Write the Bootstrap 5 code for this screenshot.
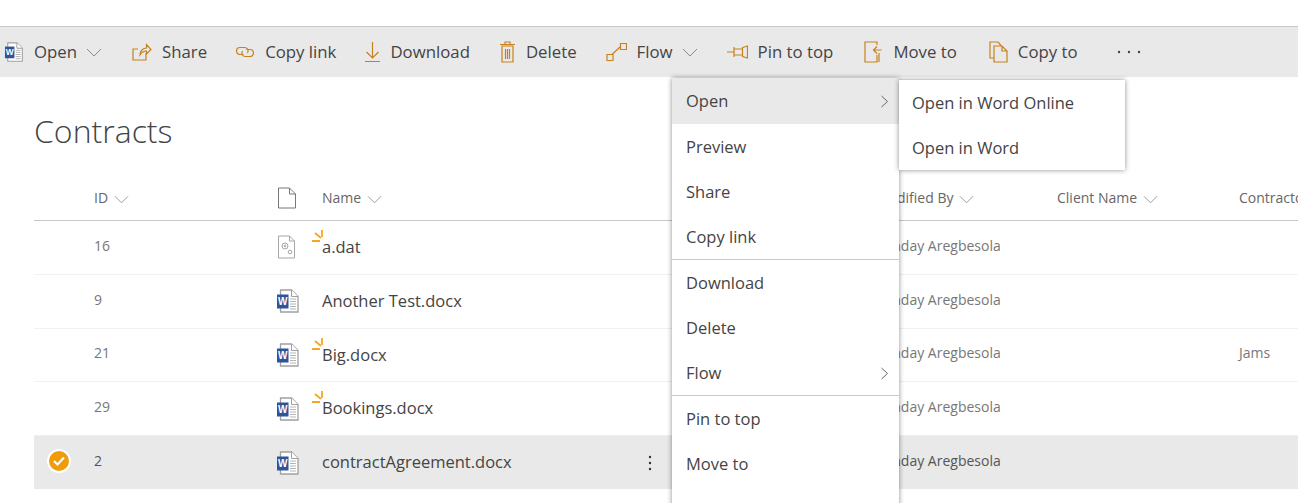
<!DOCTYPE html>
<html>

<head>
    <meta charset="utf-8">
    <meta name="viewport" content="width=device-width, initial-scale=1">
    <title>Contracts</title>
    <link href="https://cdn.jsdelivr.net/npm/bootstrap@5.3.3/dist/css/bootstrap.min.css" rel="stylesheet">
    <script src="https://cdn.jsdelivr.net/npm/bootstrap@5.3.3/dist/js/bootstrap.bundle.min.js"></script>
    <style>
        html, body { height: 503px; overflow: hidden; }
        body { font-family: "Open Sans", "Noto Sans", sans-serif; color: #444; background: #fff; position: relative; }

        .top-gap { height: 26px; }
        .cmd-bar { height: 51px; background: #e9e9e9; border-top: 1px solid #c8c8c8; font-size: 16.8px; padding-left: 4px; white-space: nowrap; }
        .cmd-item { margin-right: 29px; gap: 10px; }
        .cmd-item:nth-child(1) { margin-right: 30px; }
        .cmd-item:nth-child(2) { margin-right: 28px; }
        .cmd-item:nth-child(7) { margin-right: 31px; }
        .cmd-item:nth-child(8) { margin-right: 32px; }
        .cmd-item:nth-child(9) { margin-right: 31px; }
        .cmd-item svg { fill: none; stroke: #c8811f; stroke-width: 1.2; flex: none; }
        .cmd-item svg.chev { stroke: #888; stroke-width: 1; margin-left: -1px; }
        .cmd-dots { fill: #444; margin-left: 8px; }

        .page-title { font-size: 32px; font-weight: 300; line-height: 40px; margin: 34px 0 29px 34px; color: #444; }

        .doc-list { margin-left: 34px; }
        .doc-row { height: 53.75px; border-bottom: 1px solid #f1f1f1; font-size: 14px; color: #777; white-space: nowrap; position: relative; }
        .doc-head { height: 41px; padding-bottom: 5px; border-bottom: 1px solid #c8c8c8; font-size: 14px; color: #666; white-space: nowrap; }
        .doc-sel { background: #e9e9e9; border-bottom: 0; color: #555; height: 53px; }
        .col-check { width: 60px; flex: none; }
        .col-id { width: 183px; flex: none; }
        .col-name { width: 599px; flex: none; font-size: 16.5px; color: #444; position: relative; padding-left: 45px; }
        .col-by { width: 181px; flex: none; }
        .col-client { width: 182px; flex: none; }
        .doc-row .col-id, .doc-row .col-by, .doc-row .col-last, .doc-row .col-check { padding-bottom: 4px; }
        .doc-head .col-name { font-size: 14px; color: #666; }
        .doc-head svg.chev { fill: none; stroke: #999; margin-left: 6px; }
        .file-ico { position: absolute; left: 0; top: 50%; transform: translateY(-50%); }
        .new-mark { position: absolute; left: 35px; top: -5px; }
        .more-dots { position: absolute; left: 371px; top: 50%; transform: translateY(-50%); }

        .sel-check { width: 24px; height: 24px; margin-left: 13px; border-radius: 50%; background: #f09c0a; border: 2px solid #fff; display: flex; align-items: center; justify-content: center; }

        .pop-menu { position: absolute; background: #fff; box-shadow: 0 0 5px rgba(0, 0, 0, .45); font-size: 16.5px; color: #444; }
        .main-menu { left: 672px; top: 78px; width: 227px; height: 470px; z-index: 2; }
        .sub-menu { left: 899px; top: 80px; width: 226px; height: 90px; z-index: 3; }
        .menu-line { height: 45px; padding: 1px 10px 0 14px; white-space: nowrap; }
        .sub-menu .menu-line { padding-left: 13px; }
        .menu-on { background: #e9e9e9; height: 46px; }
        .menu-sep { border-top: 1px solid #c8c8c8; height: 46px; }
        .menu-line svg { fill: none; stroke: #666; }
    </style>
</head>

<body>
    <svg width="0" height="0" class="position-absolute">
        <defs>
            <symbol id="word" viewBox="0 0 22 24">
                <path d="M3.500 1h11l6.500 6.500V23H3.500z" fill="#fff" stroke="#a0a0a0" stroke-width="1.300"/>
                <path d="M14.500 1v6.500H21" fill="#fff" stroke="#a0a0a0"/>
                <path d="M13 10h6M13 12.500h6M13 15h6M13 17.500h6M13 20h6" stroke="#b5b5b5" fill="none"/>
                <rect x="0" y="5.500" width="11.500" height="14" fill="#2b579a"/>
                <text x="5.700" y="16" font-size="10" font-weight="700" text-anchor="middle" fill="#fff" stroke="none" font-family="Liberation Sans, sans-serif">W</text>
            </symbol>
            <symbol id="chevron" viewBox="0 0 16 9">
                <path d="M1 1l7 7 7-7"/>
            </symbol>
            <symbol id="spark" viewBox="0 0 13 14">
                <path d="M10 0v7M3 3l6 5M0 11h8" stroke="#f5a623" stroke-width="1.800" fill="none"/>
            </symbol>
        </defs>
    </svg>

    <div class="top-gap"></div>

    <div class="cmd-bar d-flex align-items-center">
        <div class="d-flex align-items-center cmd-item">
            <svg width="20" height="20" viewBox="0 0 22 24" style="stroke:none"><use href="#word"/></svg>
            <span>Open</span>
            <svg class="chev" width="16" height="9"><use href="#chevron"/></svg>
        </div>
        <div class="d-flex align-items-center cmd-item">
            <svg width="20" height="20" viewBox="0 0 20 20"><path d="M14 11v7H1V7h5M8 13c0-4 3-7 6.500-7V2.500L19 7.500l-4.500 4.500V9C11.500 9 9.500 10.500 8 13z"/></svg>
            <span>Share</span>
        </div>
        <div class="d-flex align-items-center cmd-item">
            <svg width="20" height="20" viewBox="0 0 20 20"><path d="M8.500 12.500H5a3.500 3.500 0 0 1 0-7h4.500a3.500 3.500 0 0 1 3 5.500M11.500 7.500H15a3.500 3.500 0 0 1 0 7h-4.500a3.500 3.500 0 0 1-3-5.500"/></svg>
            <span>Copy link</span>
        </div>
        <div class="d-flex align-items-center cmd-item">
            <svg width="15" height="22" viewBox="0 0 15 22"><path d="M7.500 1v16M1.500 11l6 6 6-6M0 20.500h15"/></svg>
            <span>Download</span>
        </div>
        <div class="d-flex align-items-center cmd-item">
            <svg width="17" height="22" viewBox="0 0 17 22"><path d="M3 5h11v16H3zM1 3.500h15M6 3.500V1h5v2.500M6.500 8v10M8.500 8v10M10.500 8v10"/></svg>
            <span>Delete</span>
        </div>
        <div class="d-flex align-items-center cmd-item">
            <svg width="21" height="20" viewBox="0 0 21 20"><path d="M1 12.500h6v6H1zM14.500 1.500h6v6h-6zM6 12.500l8.500-8"/></svg>
            <span>Flow</span>
            <svg class="chev" width="16" height="9"><use href="#chevron"/></svg>
        </div>
        <div class="d-flex align-items-center cmd-item">
            <svg width="21" height="14" viewBox="0 0 21 14"><path d="M0 7h7M7 2v10M7 4h8.500M7 10h8.500M15.500 2.500L20.500 1v12l-5-1.500z"/></svg>
            <span>Pin to top</span>
        </div>
        <div class="d-flex align-items-center cmd-item">
            <svg width="19" height="22" viewBox="0 0 19 22"><path d="M13 4V1H1v20h12v-3M17.500 9H10M13 5.500L9.500 9l3.500 3.500M15 12v9M13 14v7"/></svg>
            <span>Move to</span>
        </div>
        <div class="d-flex align-items-center cmd-item">
            <svg width="19" height="22" viewBox="0 0 19 22"><path d="M5 17H1V1h8l3 3.500M5 5h8l5 5v11H5zM13 5v5h5"/></svg>
            <span>Copy to</span>
        </div>
        <svg class="cmd-dots" width="24" height="4" viewBox="0 0 24 4"><circle cx="2" cy="2" r="1.200"/><circle cx="12" cy="2" r="1.200"/><circle cx="22" cy="2" r="1.200"/></svg>
    </div>

    <h1 class="page-title">Contracts</h1>

    <div class="doc-list">
        <div class="d-flex align-items-center doc-head">
            <div class="col-check"></div>
            <div class="col-id">ID<svg class="chev" width="15" height="9"><use href="#chevron"/></svg></div>
            <div class="col-name">
                <svg class="file-ico" width="20" height="22" viewBox="0 0 20 22" fill="none" stroke="#777"><path d="M1.500 1h11l6 6v14h-17zM12.500 1v6h6"/></svg>
                Name<svg class="chev" width="15" height="9"><use href="#chevron"/></svg>
            </div>
            <div class="col-by">Modified By<svg class="chev" width="15" height="9"><use href="#chevron"/></svg></div>
            <div class="col-client">Client Name<svg class="chev" width="15" height="9"><use href="#chevron"/></svg></div>
            <div>Contractor</div>
        </div>

        <div class="d-flex align-items-center doc-row">
            <div class="col-check"></div>
            <div class="col-id">16</div>
            <div class="col-name">
                <svg class="file-ico" width="19" height="24" viewBox="0 0 19 24" fill="none" stroke="#a6a6a6"><path d="M1.500 1h11l5 5v17h-16zM12.500 1v5h5"/><circle cx="8" cy="11" r="3"/><circle cx="8" cy="11" r="1"/><circle cx="13" cy="17" r="1.800"/></svg>
                <svg class="new-mark" width="13" height="14"><use href="#spark"/></svg>
                a.dat
            </div>
            <div class="col-by">Sunday Aregbesola</div>
        </div>
        <div class="d-flex align-items-center doc-row">
            <div class="col-check"></div>
            <div class="col-id">9</div>
            <div class="col-name">
                <svg class="file-ico" width="22" height="24"><use href="#word"/></svg>
                Another Test.docx
            </div>
            <div class="col-by">Sunday Aregbesola</div>
        </div>
        <div class="d-flex align-items-center doc-row">
            <div class="col-check"></div>
            <div class="col-id">21</div>
            <div class="col-name">
                <svg class="file-ico" width="22" height="24"><use href="#word"/></svg>
                <svg class="new-mark" width="13" height="14"><use href="#spark"/></svg>
                Big.docx
            </div>
            <div class="col-by">Sunday Aregbesola</div>
            <div class="col-client"></div>
            <div class="col-last">Jams</div>
        </div>
        <div class="d-flex align-items-center doc-row">
            <div class="col-check"></div>
            <div class="col-id">29</div>
            <div class="col-name">
                <svg class="file-ico" width="22" height="24"><use href="#word"/></svg>
                <svg class="new-mark" width="13" height="14"><use href="#spark"/></svg>
                Bookings.docx
            </div>
            <div class="col-by">Sunday Aregbesola</div>
        </div>
        <div class="d-flex align-items-center doc-row doc-sel">
            <div class="col-check">
                <div class="sel-check">
                    <svg width="12" height="10" viewBox="0 0 12 10" fill="none" stroke="#fff" stroke-width="2"><path d="M1 5l3.500 3.500L11 1.500"/></svg>
                </div>
            </div>
            <div class="col-id">2</div>
            <div class="col-name">
                <svg class="file-ico" width="22" height="24"><use href="#word"/></svg>
                contractAgreement.docx
                <svg class="more-dots" width="4" height="16" viewBox="0 0 4 16" fill="#333"><circle cx="2" cy="2" r="1.200"/><circle cx="2" cy="8" r="1.200"/><circle cx="2" cy="14" r="1.200"/></svg>
            </div>
            <div class="col-by">Sunday Aregbesola</div>
        </div>
    </div>

    <div class="pop-menu main-menu">
        <div class="d-flex align-items-center justify-content-between menu-line menu-on">
            <span>Open</span>
            <svg width="9" height="13" viewBox="0 0 9 13"><path d="M1.500 1l6 5.500-6 5.500"/></svg>
        </div>
        <div class="d-flex align-items-center menu-line">Preview</div>
        <div class="d-flex align-items-center menu-line">Share</div>
        <div class="d-flex align-items-center menu-line">Copy link</div>
        <div class="d-flex align-items-center menu-line menu-sep">Download</div>
        <div class="d-flex align-items-center menu-line">Delete</div>
        <div class="d-flex align-items-center justify-content-between menu-line">
            <span>Flow</span>
            <svg width="9" height="13" viewBox="0 0 9 13"><path d="M1.500 1l6 5.500-6 5.500"/></svg>
        </div>
        <div class="d-flex align-items-center menu-line menu-sep">Pin to top</div>
        <div class="d-flex align-items-center menu-line">Move to</div>
    </div>

    <div class="pop-menu sub-menu">
        <div class="d-flex align-items-center menu-line">Open in Word Online</div>
        <div class="d-flex align-items-center menu-line">Open in Word</div>
    </div>
</body>

</html>
